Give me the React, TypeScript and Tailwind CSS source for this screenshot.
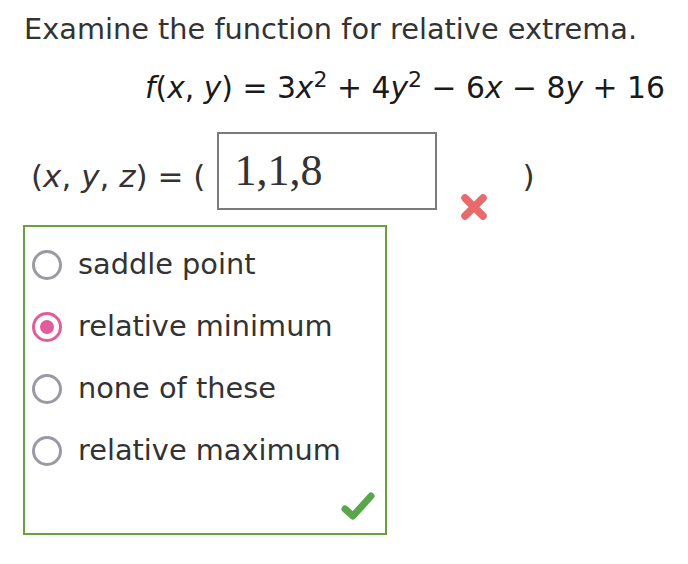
import React from 'react';

const options = [
  { label: 'saddle point', checked: false },
  { label: 'relative minimum', checked: true },
  { label: 'none of these', checked: false },
  { label: 'relative maximum', checked: false },
];

const Radio: React.FC<{ checked: boolean }> = ({ checked }) => (
  <span
    className={`flex h-[30px] w-[30px] shrink-0 items-center justify-center rounded-full border-[3px] ${
      checked ? 'border-[#e25c9c]' : 'border-[#9a9aa5]'
    }`}
  >
    {checked && <span className="h-[14px] w-[14px] rounded-full bg-[#e25c9c]" />}
  </span>
);

const App: React.FC = () => {
  return (
    <div
      className="h-[564px] w-[688px] bg-white pl-[23px] pt-[10px] text-[#333]"
      style={{ fontFamily: '"DejaVu Sans", Verdana, sans-serif' }}
    >
      <h1 className="pl-px text-[28.8px] leading-[38px]">Examine the function for relative extrema.</h1>

      <p className="mt-[20px] pl-[122px] text-[29.8px] leading-[40px] text-[#1a1a1a]">
        <i>f</i>(<i>x</i>, <i>y</i>) = 3<i>x</i>
        <sup className="text-[22px]">2</sup> + 4<i>y</i>
        <sup className="text-[22px]">2</sup> − 6<i>x</i> − 8<i>y</i> + 16
      </p>

      <div className="mt-[24px] flex items-start">
        <span className="ml-[8px] mt-[25px] text-[31px] leading-[38px]">
          (<i>x</i>, <i>y</i>, <i>z</i>) = (
        </span>
        <div
          className="ml-[12px] flex h-[78px] w-[220px] items-center border-2 border-[#7b7b7b] pl-[15px] text-[44px] text-[#333]"
          style={{ fontFamily: '"Liberation Serif", serif' }}
        >
          1,1,8
        </div>
        <svg className="ml-[22px] mt-[60px]" width="30" height="30" viewBox="0 0 30 30">
          <path d="M6 6 L24 24 M24 6 L6 24" stroke="#e55151" strokeWidth="7.5" strokeLinecap="round" opacity="0.85" />
        </svg>
        <span className="ml-[33px] mt-[25px] text-[31px] leading-[38px]">)</span>
      </div>

      <div className="mt-[3px] flex h-[310px] w-[364px] flex-col border-2 border-[#6a9e3f] pl-[7px] pt-[7px]">
        {options.map((o) => (
          <label key={o.label} className="flex h-[62px] items-center gap-[16px] text-[28.8px]">
            <Radio checked={o.checked} />
            <span>{o.label}</span>
          </label>
        ))}
        <div className="mb-[12px] mr-[10px] mt-auto flex justify-end">
          <svg width="34" height="30" viewBox="0 0 34 30">
            <path d="M4 18 L12 25 L30 5" fill="none" stroke="#5aa64a" strokeWidth="7" strokeLinecap="round" strokeLinejoin="round" />
          </svg>
        </div>
      </div>
    </div>
  );
};

export default App;
